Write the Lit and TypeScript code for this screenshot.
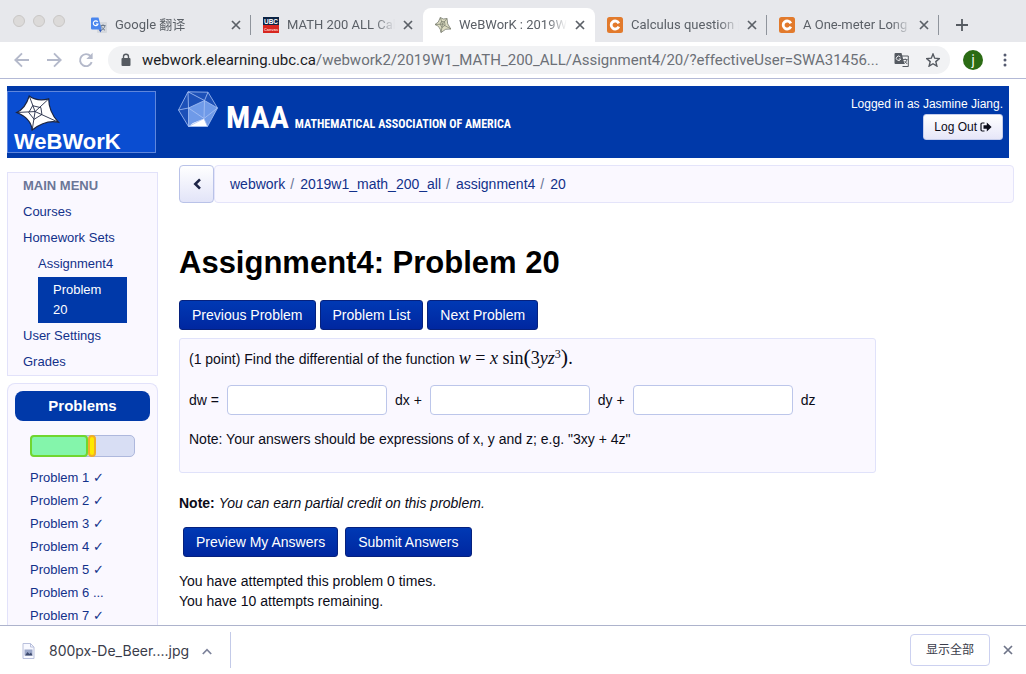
import { LitElement, html, css, svg, nothing } from "lit";
import { customElement, property } from "lit/decorators.js";
import { classMap } from "lit/directives/class-map.js";

const closeGlyph = html`<svg width="10" height="10" viewBox="0 0 10 10" aria-hidden="true">
  <path d="M1 1 9 9M9 1 1 9" fill="none" stroke="currentColor" stroke-width="1.7" />
</svg>`;

const favicons: Record<string, unknown> = {
  translate: svg`
    <rect x="6" y="5" width="10" height="11" rx="1" fill="#d5d8dd"/>
    <path d="M9.5 8.5h5M12 7.3v1.2M14 8.8c-.6 2-2 3.6-3.8 4.6M10.4 9.4c.7 1.6 2 3 3.6 3.8" stroke="#6d7b8d" fill="none"/>
    <path d="M1.2 0.5h6.3l3.2 12H1.2A1.2 1.2 0 0 1 0 11.300V1.700A1.200 1.200 0 0 1 1.200.5z" fill="#4a86ee"/>
    <path d="M7.600 12.500h3.100l-1.200 3z" fill="#2b57c0"/>
    <path d="M6.700 4.900A2.400 2.400 0 1 0 7 7H4.900" fill="none" stroke="#fff" stroke-width="1.100"/>`,
  ubc: svg`
    <rect width="16" height="8" fill="#0c2344"/><rect y="8" width="16" height="8" fill="#d8261f"/>
    <text x="8" y="6.800" text-anchor="middle" font-family="Liberation Sans" font-weight="700" font-size="6.500" fill="#fff">UBC</text>
    <text x="8" y="13.500" text-anchor="middle" font-family="Liberation Sans" font-weight="700" font-size="4" fill="#fbd0cc">Canvas</text>`,
  web: svg`
    <path d="M0 7.500Q4 6 5.300.5 8 3 12 1.500 11.500 7 15.800 12 10.500 10.800 6 15.500 5.500 9.500 0 7.500z" fill="#dcdcc2" stroke="#85887c" stroke-width=".9"/>
    <path d="M7.500 7.200 5.300.5M7.500 7.200 12 1.500M7.500 7.200l8.300 4.800M7.500 7.200 6 15.500M7.500 7.200 0 7.500M5 7l1.500-2.500 3 .2.600 3.500L7 10.500z" fill="none" stroke="#777b6c" stroke-width=".7"/>`,
  chegg: svg`
    <rect width="16" height="16" rx="2.500" fill="#e27a2c"/>
    <path d="M11.800 6.300A4 4 0 1 0 11.800 9.700" fill="none" stroke="#fff" stroke-width="2.800"/>`,
};

@customElement("browser-tab")
class BrowserTab extends LitElement {
  @property() label = "";
  @property() icon = "";
  @property({ type: Boolean }) active = false;
  @property({ type: Boolean }) divider = false;

  static styles = css`
    :host { display: block; flex: 0 1 172px; min-width: 0; }
    .tab { position: relative; box-sizing: border-box; height: 34px; display: flex; align-items: center; gap: 8px; padding: 0 10px 0 12px; color: #5b6067; font: 13px/20px Roboto, "Noto Sans CJK SC", sans-serif; }
    .tab.active { background: #fff; border-radius: 8px 8px 0 0; }
    .tab.divider::after { content: ""; position: absolute; right: 0; top: 7px; width: 1px; height: 20px; background: #8f949c; }
    .title { flex: 1; min-width: 0; overflow: hidden; white-space: nowrap; mask-image: linear-gradient(to right, #000 calc(100% - 20px), transparent); }
    .icon { flex: none; }
    .close { border: 0; background: none; padding: 0; width: 10px; height: 10px; display: flex; color: #5b6067; }
  `;

  render() {
    return html`<div class=${classMap({ tab: true, active: this.active, divider: this.divider })}>
      <svg class="icon" width="16" height="16" viewBox="0 0 16 16" aria-hidden="true">${favicons[this.icon]}</svg>
      <span class="title">${this.label}</span>
      <button class="close" aria-label="Close tab">${closeGlyph}</button>
    </div>`;
  }
}

@customElement("browser-chrome")
class BrowserChrome extends LitElement {
  static styles = css`
    :host { display: block; flex: none; }
    .strip { display: flex; align-items: flex-end; height: 42px; background: #e7e8ec; }
    .lights { align-self: center; display: flex; gap: 8px; padding: 0 14px 0 13px; }
    .light { width: 10px; height: 10px; border: 1px solid #c9c7c6; border-radius: 50%; background: #dcdad9; }
    .tabs { display: flex; flex: 0 1 861px; min-width: 0; }
    .new { align-self: center; display: flex; border: 0; background: none; padding: 0; margin: 8px 0 0 15px; color: #555a61; }
    .bar { display: flex; align-items: center; height: 36px; padding: 0 15px 0 14px; border-bottom: 1px solid #b3b9d6; background: #fff; }
    .nav { display: flex; border: 0; background: none; padding: 0; margin-right: 16px; color: #b4b9ca; }
    .omnibox { flex: 1; min-width: 0; display: flex; align-items: center; height: 28px; padding: 0 10px 0 12px; margin: 0 13px 0 -2px; border-radius: 14px; background: #f1f2f4; }
    .url { flex: 1; min-width: 0; margin: 0 0 0 10px; overflow: hidden; white-space: nowrap; font: 15px/20px Roboto, sans-serif; color: #6c7077; }
    .host { color: #1b1c1f; }
    .tool { display: flex; border: 0; background: none; padding: 0; margin-left: 16px; color: #555a61; }
    .avatar { width: 20px; height: 20px; border: 0; padding: 0; border-radius: 50%; background: #2b6b14; color: #fff; font: 13px/20px Inter, sans-serif; }
    .more { display: flex; border: 0; background: none; padding: 0; margin: 0 4px 0 20px; color: #555b70; }
  `;

  render() {
    return html`
      <div class="strip">
        <div class="lights"><span class="light"></span><span class="light"></span><span class="light"></span></div>
        <div class="tabs">
          <browser-tab icon="translate" label="Google 翻译" divider></browser-tab>
          <browser-tab icon="ubc" label="MATH 200 ALL Calc"></browser-tab>
          <browser-tab icon="web" label="WeBWorK : 2019W1" active></browser-tab>
          <browser-tab icon="chegg" label="Calculus question |" divider></browser-tab>
          <browser-tab icon="chegg" label="A One-meter Long" divider></browser-tab>
        </div>
        <button class="new" aria-label="New tab"><svg width="14" height="14" viewBox="0 0 14 14"><path d="M7 1v12M1 7h12" stroke="currentColor" stroke-width="1.800"/></svg></button>
      </div>
      <div class="bar">
        <button class="nav" aria-label="Back"><svg width="16" height="16" viewBox="0 0 16 16"><path d="M15 8H1.500M8 1.300 1.300 8 8 14.700" fill="none" stroke="currentColor" stroke-width="1.900"/></svg></button>
        <button class="nav" aria-label="Forward"><svg width="16" height="16" viewBox="0 0 16 16"><path d="M1 8h13.500M8 1.300 14.700 8 8 14.700" fill="none" stroke="currentColor" stroke-width="1.900"/></svg></button>
        <button class="nav" aria-label="Reload"><svg width="16" height="16" viewBox="0 0 16 16"><path d="M13.700 10.200A6 6 0 1 1 12.600 4.200" fill="none" stroke="currentColor" stroke-width="1.900"/><path d="M14.600.8v6.200H8.400z" fill="currentColor"/></svg></button>
        <div class="omnibox">
          <svg width="12" height="14" viewBox="0 0 12 14" aria-hidden="true"><rect x="1.500" y="5" width="9" height="8" rx="1" fill="#555a61"/><path d="M3.500 5.500V3.700a2.500 2.500 0 0 1 5 0v1.800" fill="none" stroke="#555a61" stroke-width="1.400"/></svg>
          <span class="url"><span class="host">webwork.elearning.ubc.ca</span>/webwork2/2019W1_MATH_200_ALL/Assignment4/20/?effectiveUser=SWA31456...</span>
          <button class="tool" aria-label="Translate page"><svg width="16" height="16" viewBox="0 0 16 16">
            <path d="M7 4h7.300v10.500H8.500" fill="none" stroke="currentColor"/>
            <path d="M1.500 1h6l3 11h-9A1 1 0 0 1 .5 11V2a1 1 0 0 1 1-1z" fill="currentColor"/>
            <path d="M6.400 5A2.200 2.200 0 1 0 6.700 7H4.800" fill="none" stroke="#f1f2f4"/>
            <path d="M9 7.500h4.500M11.200 6.500v1M13 7.700c-.6 1.900-1.600 3-2.700 3.800M10.600 9l2.600 3" fill="none" stroke="currentColor" stroke-width=".9"/></svg></button>
          <button class="tool" aria-label="Bookmark"><svg width="14" height="14" viewBox="0 0 14 14"><path d="M7 1 8.700 5.200l4.600.4-3.500 3 1.100 4.500L7 10.700l-3.900 2.400 1.100-4.500L.7 5.600l4.600-.4z" fill="none" stroke="currentColor" stroke-width="1.400"/></svg></button>
        </div>
        <button class="avatar" aria-label="Profile">j</button>
        <button class="more" aria-label="Menu"><svg width="4" height="14" viewBox="0 0 4 14" fill="currentColor"><circle cx="2" cy="2" r="1.500"/><circle cx="2" cy="7" r="1.500"/><circle cx="2" cy="12" r="1.500"/></svg></button>
      </div>`;
  }
}

@customElement("site-banner")
class SiteBanner extends LitElement {
  static styles = css`
    :host { display: block; margin-right: 17px; }
    .banner { box-sizing: border-box; height: 72px; display: flex; align-items: flex-start; padding: 5px 6px 4px 0; background: #0039a9; color: #fff; font-family: "Liberation Sans", sans-serif; }
    .webwork { box-sizing: border-box; width: 149px; height: 62px; padding: 3px 6px 0; border: 1px solid #5f86dc; background: #0a4dd1; display: flex; flex-direction: column; color: #fff; text-decoration: none; }
    .word { font-weight: 700; font-size: 22px; line-height: 20px; }
    .maa { display: flex; align-items: baseline; gap: 6px; margin-left: 22px; color: #fff; text-decoration: none; white-space: nowrap; font-family: "Roboto Condensed", "Open Sans Condensed", "Liberation Sans Narrow", Roboto, sans-serif; font-weight: 700; }
    .solid { margin-right: 2px; }
    .short { font-size: 32px; line-height: 32px; }
    .long { font-size: 12px; line-height: 16px; }
    .user { margin-left: auto; padding-top: 4px; display: flex; flex-direction: column; align-items: flex-end; gap: 1px; font-size: 12px; line-height: 18px; }
    .logout { display: flex; align-items: center; gap: 3px; height: 26px; padding: 0 10px; border: 1px solid #c5cdec; border-radius: 3px; background: linear-gradient(#fff, #e6e6f8); color: #0b0c18; font: 12px/18px "Liberation Sans", sans-serif; }
  `;

  render() {
    return html`<div class="banner">
      <a class="webwork" href="#">
        <svg width="48" height="38" viewBox="0 0 48 38" aria-hidden="true">
          <path d="M2 18Q11 14 15 1 23 7 35 4 35 17 45 28 32 25 18 36 17 24 2 18z" fill="#fff" stroke="#1b2440" stroke-width="1.200"/>
          <path d="M2 18 21 17M15 1l6 16M35 4 21 17M45 28 21 17M18 36l3-19M14.500 18 18.500 11 27 13 28 20 20 25z" fill="none" stroke="#1b2440" stroke-width=".9"/>
        </svg>
        <span class="word">WeBWorK</span>
      </a>
      <a class="maa" href="#">
        <svg class="solid" width="40" height="37" viewBox="0 0 40 37" aria-hidden="true">
          <path d="M10 .8 30 1.200 39.500 17 29.500 35.500 10.500 35.500.500 19z" fill="#1c50b8"/>
          <path d="M10.500 17 26.500 9.500 39.500 17 29.500 35.500 26 27 10.500 35.500z" fill="#6f9ae8"/>
          <path d="M26 27.500 29.500 35.500 10.500 35.500 15 32z" fill="#fff"/>
          <path d="M10 .8 30 1.200 39.500 17 29.500 35.500 10.500 35.500.500 19zM10.500 17 26.500 9.500 26 27.500zM10 .8 26.500 9.500M10 .8l.5 16.200M30 1.200 26.500 9.500 39.500 17M39.500 17 26 27.500 29.500 35.500M10.500 35.500 26 27.500M10.500 35.500V17L.5 19" fill="none" stroke="#a9c3f5" stroke-width=".8"/>
        </svg>
        <span class="short">MAA</span><span class="long">MATHEMATICAL ASSOCIATION OF AMERICA</span>
      </a>
      <div class="user">
        <span>Logged in as Jasmine Jiang.</span>
        <button class="logout">Log Out
          <svg width="12" height="10" viewBox="0 0 12 10" aria-hidden="true"><path d="M4.500 1H2.200A1.200 1.200 0 0 0 1 2.200v5.600A1.200 1.200 0 0 0 2.200 9h2.300" fill="none" stroke="#0b0c18" stroke-width="1.200"/><path d="M3.500 3.200h3.300V.6L11.600 5 6.800 9.400V6.800H3.500z" fill="#0b0c18"/></svg>
        </button>
      </div>
    </div>`;
  }
}

@customElement("site-sidebar")
class SiteSidebar extends LitElement {
  static styles = css`
    :host { display: flex; flex-direction: column; flex: none; width: 151px; gap: 7px; padding-top: 7px; font: 13px/20px "Liberation Sans", sans-serif; }
    a { color: #12318a; text-decoration: none; }
    .menu { border: 1px solid #e2e2fa; background: #faf8ff; padding: 0 30px 0 15px; }
    .heading { margin: 0; padding: 3px 0; font: inherit; font-weight: 700; color: #6b7697; white-space: nowrap; }
    .list, .problems { list-style: none; margin: 0; padding: 0; }
    .link { display: block; padding: 3px 0; white-space: nowrap; }
    .nested { margin-left: 15px; }
    .link.current { padding: 3px 15px; background: #0039a9; color: #fff; white-space: normal; }
    .panel { flex: 1; border: 1px solid #e2e2fa; border-bottom: 0; border-radius: 8px 8px 0 0; background: #faf8ff; padding: 7px 7px 0; }
    .title { margin: 0; border-radius: 8px; background: #0039a9; color: #fff; text-align: center; font-weight: 700; font-size: 15px; line-height: 30px; }
    .meter { box-sizing: border-box; display: flex; height: 22px; margin: 14px 15px 9px; border: 1px solid #aeb8dd; border-radius: 5px; background: #d8def4; }
    .done, .partial { box-sizing: border-box; border: 2px solid #70d62f; border-radius: 4px; background: #84f5ab; margin: -1px 0; }
    .done { margin-left: -1px; }
    .partial { border-color: #f0ae28; background: #ffe900; }
    .problems { padding-left: 15px; line-height: 23px; }
    .tick { font-family: "DejaVu Sans", sans-serif; font-weight: 700; line-height: 20px; }
  `;

  render() {
    const solved = [true, true, true, true, true, false, true];
    return html`
      <nav class="menu">
        <h2 class="heading">MAIN MENU</h2>
        <ul class="list">
          <li><a class="link" href="#">Courses</a></li>
          <li><a class="link" href="#">Homework Sets</a>
            <ul class="list nested">
              <li><a class="link" href="#">Assignment4</a></li>
              <li><a class="link current" href="#">Problem 20</a></li>
            </ul>
          </li>
          <li><a class="link" href="#">User Settings</a></li>
          <li><a class="link" href="#">Grades</a></li>
        </ul>
      </nav>
      <section class="panel">
        <h2 class="title">Problems</h2>
        <div class="meter"><span class="done" style="width:56%"></span><span class="partial" style="width:8%"></span></div>
        <ul class="problems">
          ${solved.map((s, i) => html`<li><a href="#">Problem ${i + 1} ${s ? html`<span class="tick">✓</span>` : "..."}</a></li>`)}
        </ul>
      </section>`;
  }
}

@customElement("problem-page")
class ProblemPage extends LitElement {
  static styles = css`
    :host { display: block; flex: 1; min-width: 0; margin-right: 12px; font: 14px/20px "Liberation Sans", sans-serif; color: #0b0c18; }
    .path { display: flex; height: 38px; }
    .back { box-sizing: border-box; width: 35px; border: 1px solid #b9c2e8; border-radius: 4px; background: linear-gradient(#fff, #e2e4f8); padding: 0; display: flex; align-items: center; justify-content: center; color: #1e2547; }
    .crumbs { flex: 1; box-sizing: border-box; display: flex; gap: 5px; align-items: center; margin: 0; padding: 0 15px; list-style: none; border: 1px solid #e4e4fa; border-radius: 4px; background: #faf8ff; color: #6b7697; }
    .crumbs a { color: #12318a; text-decoration: none; }
    .crumb { display: flex; gap: 6px; }
    .title { margin: 40px 0 17px; font-size: 31px; line-height: 40px; color: #000; }
    .row { display: flex; gap: 4px; }
    .button { box-sizing: border-box; height: 30px; padding: 0 12px; border: 1px solid #06217d; border-radius: 3px; background: linear-gradient(#0039b4, #0027a0); color: #fff; font: inherit; }
    .problem { box-sizing: border-box; width: 83.5%; margin-top: 8px; padding: 10px 9px 23px; border: 1px solid #e0e2fa; border-radius: 3px; background: #faf8ff; }
    .text { margin: 0; }
    .math { font-family: "Liberation Serif", serif; font-size: 18px; line-height: 1px; white-space: nowrap; }
    .paren { font-size: 22px; line-height: 1px; }
    .sup { font-size: 12px; line-height: 1px; vertical-align: 6px; }
    .answers { display: flex; align-items: center; gap: 8px; margin: 16px 0 14px; }
    .field { box-sizing: border-box; width: 160px; height: 30px; border: 1px solid #bcc6ea; border-radius: 4px; background: #fff; padding: 4px 6px; font: inherit; }
    .note { margin: 20px 0 14px; }
    .submit { display: flex; gap: 7px; padding-left: 4px; margin-bottom: 14px; }
  `;

  render() {
    const path = ["webwork", "2019w1_math_200_all", "assignment4", "20"];
    return html`
      <nav class="path">
        <button class="back" aria-label="Up"><svg width="10" height="12" viewBox="0 0 10 12"><path d="M8 1.300 3.300 6 8 10.700" fill="none" stroke="currentColor" stroke-width="2.600"/></svg></button>
        <ul class="crumbs">
          ${path.map((p, i) => html`<li class="crumb">${i ? html`<span>/</span>` : nothing}<a href="#">${p}</a></li>`)}
        </ul>
      </nav>
      <h1 class="title">Assignment4: Problem 20</h1>
      <div class="row">
        <button class="button">Previous Problem</button>
        <button class="button">Problem List</button>
        <button class="button">Next Problem</button>
      </div>
      <section class="problem">
        <p class="text">(1 point) Find the differential of the function <span class="math"><i>w</i> = <i>x</i> sin<span class="paren">(</span>3<i>yz</i><span class="sup">3</span><span class="paren">)</span>.</span></p>
        <div class="answers">
          <label for="dx">dw =</label><input class="field" id="dx" type="text" />
          <label for="dy">dx +</label><input class="field" id="dy" type="text" />
          <label for="dz">dy +</label><input class="field" id="dz" type="text" />
          <span>dz</span>
        </div>
        <p class="text">Note: Your answers should be expressions of x, y and z; e.g. "3xy + 4z"</p>
      </section>
      <p class="note"><b>Note:</b> <i>You can earn partial credit on this problem.</i></p>
      <div class="submit">
        <button class="button">Preview My Answers</button>
        <button class="button">Submit Answers</button>
      </div>
      <p class="text">You have attempted this problem 0 times.<br />You have 10 attempts remaining.</p>`;
  }
}

@customElement("download-shelf")
class DownloadShelf extends LitElement {
  static styles = css`
    :host { display: block; flex: none; }
    .shelf { display: flex; align-items: center; height: 48px; padding: 0 13px 0 22px; border-top: 1px solid #adb3cc; background: #fff; font: 14px/20px Inter, "Noto Sans CJK SC", sans-serif; color: #3a3c4a; }
    .file { box-sizing: border-box; display: flex; align-items: center; border: 0; border-right: 1px solid #c3cae8; background: none; height: 36px; padding: 2px 18px 0 0; font: inherit; color: inherit; }
    .name { margin: 0 13px 0 14px; }
    .all { box-sizing: border-box; margin: 0 13px 0 auto; height: 32px; padding: 0 15px; border: 1px solid #ccd1f0; border-radius: 4px; background: #fff; font: 12px/18px Inter, "Noto Sans CJK SC", sans-serif; color: #3a3c4a; }
    .close { display: flex; border: 0; background: none; padding: 0; color: #6e7488; }
  `;

  render() {
    return html`<div class="shelf">
      <button class="file">
        <svg width="13" height="16" viewBox="0 0 13 16" aria-hidden="true"><path d="M1 .5h7.500l3.500 3.500v11.500H1z" fill="#f8f9ff" stroke="#b9c0dc"/><path d="M8.500.5V4H12" fill="none" stroke="#b9c0dc"/><rect x="2.500" y="6.500" width="8" height="6" fill="#9aa6c8"/><path d="M3 12.500 5.500 9l2 2 1.500-1.500 1.500 3z" fill="#3d4a6e"/></svg>
        <span class="name">800px-De_Beer....jpg</span>
        <svg width="10" height="7" viewBox="0 0 10 7" aria-hidden="true"><path d="M.8 6 5 1.700 9.200 6" fill="none" stroke="#7c829a" stroke-width="1.700"/></svg>
      </button>
      <button class="all">显示全部</button>
      <button class="close" aria-label="Close downloads">${closeGlyph}</button>
    </div>`;
  }
}

@customElement("app-root")
class AppRoot extends LitElement {
  static styles = css`
    :host { display: flex; flex-direction: column; height: 100vh; overflow: hidden; background: #fff; }
    .page { flex: 1; min-height: 0; overflow: hidden; display: flex; flex-direction: column; padding: 7px 0 0 7px; }
    .columns { flex: 1; min-height: 0; display: flex; gap: 21px; padding-top: 7px; }
  `;

  render() {
    return html`
      <browser-chrome></browser-chrome>
      <main class="page">
        <site-banner></site-banner>
        <div class="columns">
          <site-sidebar></site-sidebar>
          <problem-page></problem-page>
        </div>
      </main>
      <download-shelf></download-shelf>`;
  }
}
